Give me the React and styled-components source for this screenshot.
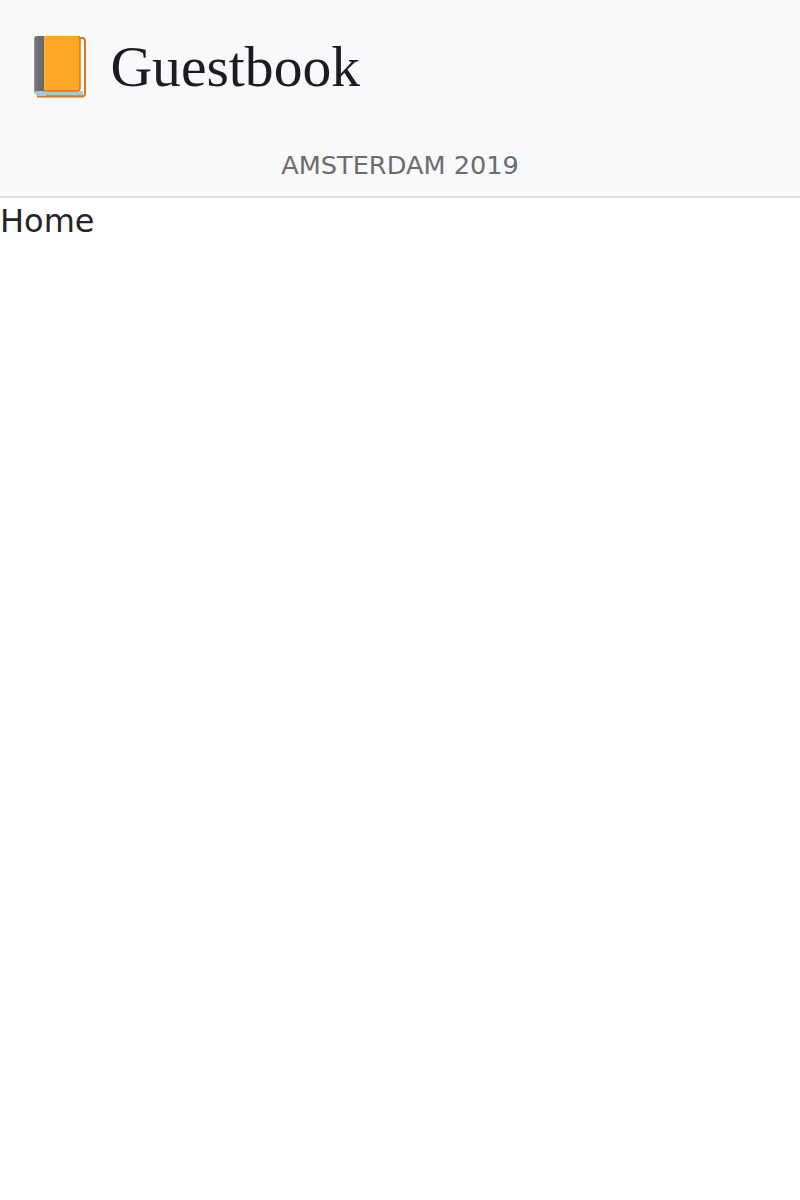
import React from "react";
import styled, { createGlobalStyle } from "styled-components";

const GlobalStyle = createGlobalStyle`
  body {
    margin: 0;
    background: #fff;
    color: #212529;
    font-family: "DejaVu Sans", sans-serif;
    font-size: 32px;
    line-height: 48px;
  }
`;

const Header = styled.header`
  height: 196px;
  background: #f8f9fa;
  border-bottom: 2px solid #dee2e6;
  display: flex;
  flex-direction: column;
`;

const Brand = styled.div`
  display: flex;
  align-items: center;
  gap: 22.5px;
  padding: 30px 0 0 32px;
  height: 72px;
`;

const Title = styled.h1`
  margin: 2px 0 0;
  font-family: "Liberation Serif", serif;
  font-weight: 400;
  font-size: 57.6px;
  line-height: 72px;
  color: #1a1c1f;
`;

const Subtitle = styled.div`
  margin-top: 39px;
  text-align: center;
  font-size: 25.6px;
  line-height: 48px;
  color: #6c6c6c;
`;

const Page = styled.main`
  margin-top: -1px;
`;

const BookIcon = () => (
  <svg width="56" height="64" viewBox="32 34 56 64">
    <path d="M38 38h44a3 3 0 0 1 3 3v53a2.500 2.500 0 0 1-2.500 2.500H38z" fill="#fff" stroke="#e2761c" strokeWidth="2" />
    <path d="M37 91h46v4.800H38a3 3 0 0 1-3-3z" fill="#9ccbde" />
    <path d="M46 96h37" stroke="#e2761c" strokeWidth="1.500" fill="none" />
    <path d="M37 36h7v55h-7a2.500 2.500 0 0 0-2.500 2V38.500A2.500 2.500 0 0 1 37 36z" fill="#68696b" />
    <path d="M37 36h1.500v55H37a2.500 2.500 0 0 0-2.500 2V38.500A2.500 2.500 0 0 1 37 36z" fill="#747577" />
    <path d="M44 36h33.500a2.500 2.500 0 0 1 2.500 2.500V88a3 3 0 0 1-3 3H44z" fill="#ffa726" />
    <path d="M78 36.500a2.500 2.500 0 0 1 2 2.500V88a3 3 0 0 1-3 3h-33" fill="none" stroke="#e2761c" strokeWidth="1.500" />
  </svg>
);

export default function App() {
  return (
    <>
      <GlobalStyle />
      <Header>
        <Brand>
          <BookIcon />
          <Title>Guestbook</Title>
        </Brand>
        <Subtitle>AMSTERDAM 2019</Subtitle>
      </Header>
      <Page>Home</Page>
    </>
  );
}
